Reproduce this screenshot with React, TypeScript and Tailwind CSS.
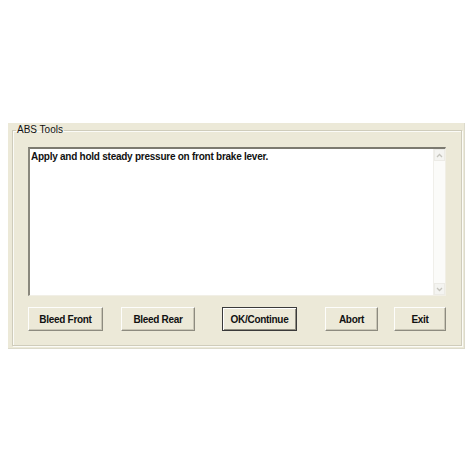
import React from "react";

const buttons = [
  { label: "Bleed Front", w: "w-[75px]", ml: "ml-0", focus: false },
  { label: "Bleed Rear", w: "w-[74px]", ml: "ml-[18px]", focus: false },
  { label: "OK/Continue", w: "w-[75px]", ml: "ml-[27px]", focus: true },
  { label: "Abort", w: "w-[53px]", ml: "ml-[28px]", focus: false },
  { label: "Exit", w: "w-[52px]", ml: "ml-[16px]", focus: false },
];

function XpButton({ label, w, ml, focus }: { label: string; w: string; ml: string; focus: boolean }) {
  return (
    <button
      className={
        focus
          ? `${w} ${ml} h-[24px] bg-[#ECE9D8] border border-[#3a3a3a] shadow-[inset_1px_1px_0_#fff,inset_-1px_-1px_0_#8f8d80] text-[10px] font-bold tracking-[-0.3px] text-[#111]`
          : `${w} ${ml} h-[24px] bg-[#ECE9D8] border border-t-[#fdfdfb] border-l-[#fdfdfb] border-r-[#8d8b7f] border-b-[#8d8b7f] shadow-[inset_-1px_-1px_0_#c9c6b6] text-[10px] font-bold tracking-[-0.3px] text-[#111]`
      }
    >
      {label}
    </button>
  );
}

function ScrollArrow({ up }: { up: boolean }) {
  return (
    <div className="h-[12px] w-full flex items-center justify-center bg-[#f4f4f1] border border-[#ecebe6]">
      <svg width="7" height="5" viewBox="0 0 7 5">
        <path d={up ? "M1 4 L3.5 1.5 L6 4" : "M1 1 L3.5 3.5 L6 1"} fill="none" stroke="#c4c3bc" strokeWidth="1.3" />
      </svg>
    </div>
  );
}

export default function App() {
  return (
    <div
      className="w-[474px] h-[474px] bg-white pt-[123px] pl-[8px]"
      style={{ fontFamily: '"Liberation Sans", Arial, sans-serif' }}
    >
      <div className="w-[457px] h-[226px] bg-[#ECE9D8] border-r border-b border-[#dcdacb] px-[4px] pt-[1px]">
        <fieldset className="w-[450px] h-[222px] border border-[#cfccbb] shadow-[1px_1px_0_#fbfbf7,inset_1px_1px_0_#fbfbf7] px-[15px] pt-[11px]">
          <legend className="ml-[-12px] px-[1px] text-[10px] leading-[12px] text-[#111]">ABS Tools</legend>
          <div className="w-[418px] h-[149px] flex bg-white border-t-2 border-l-2 border-t-[#7c7a70] border-l-[#8a887d] border-r border-b border-r-[#f1efe6] border-b-[#f1efe6]">
            <div className="flex-1 pl-[1px] pt-[1px] text-[10px] leading-[13px] font-bold tracking-[-0.25px] text-[#111]">
              Apply and hold steady pressure on front brake lever.
            </div>
            <div className="w-[12px] h-full flex flex-col justify-between bg-[#fbfbf9] border-l border-[#f0efea]">
              <ScrollArrow up />
              <ScrollArrow up={false} />
            </div>
          </div>
          <div className="flex mt-[11px]">
            {buttons.map((b) => (
              <XpButton key={b.label} {...b} />
            ))}
          </div>
        </fieldset>
      </div>
    </div>
  );
}
